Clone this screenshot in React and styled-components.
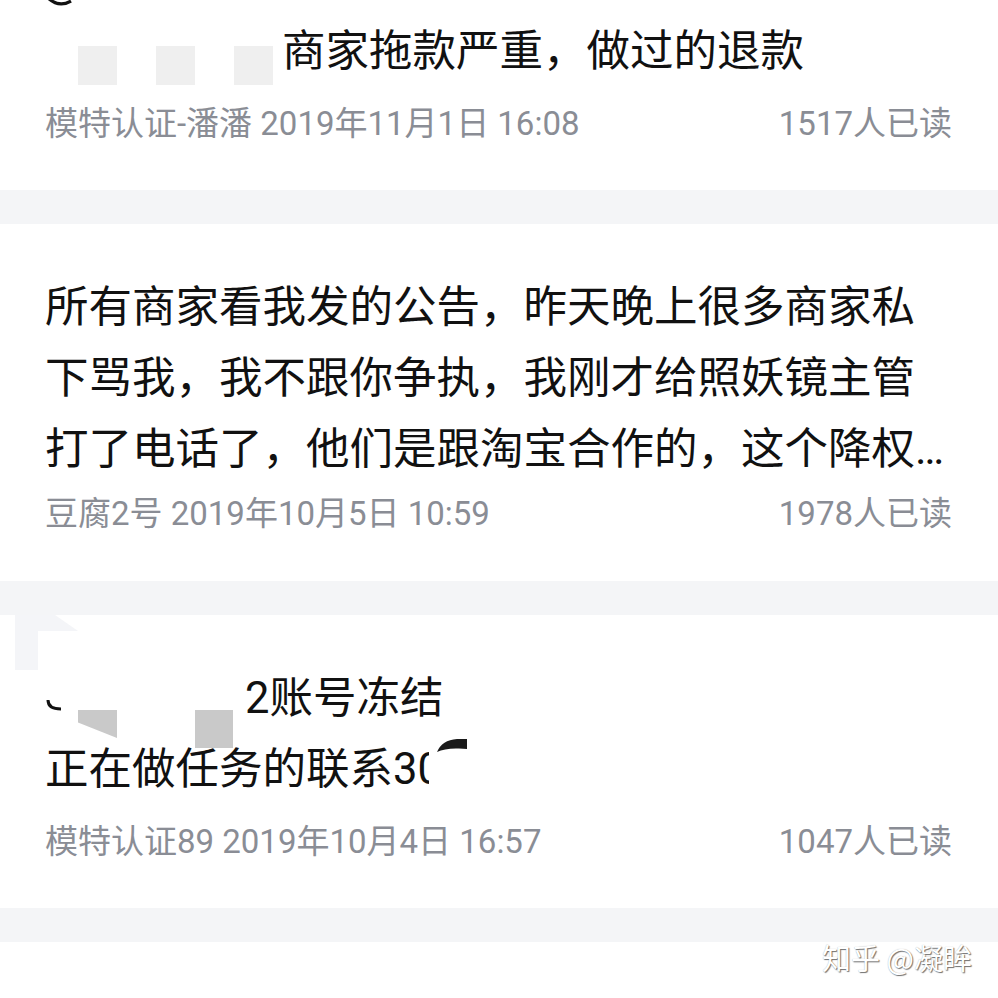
import React from 'react';
import styled, { createGlobalStyle } from 'styled-components';

const GlobalStyle = createGlobalStyle`
  html, body {
    margin: 0;
    padding: 0;
    background: #ffffff;
  }
  body {
    font-family: Roboto, "Noto Sans CJK SC", sans-serif;
    overflow: hidden;
  }
`

const posts = [
  {
    id: 'p1',
    meta: '模特认证-潘潘 2019年11月1日 16:08',
    reads: '1517人已读',
  },
  {
    id: 'p2',
    lines: [
      '所有商家看我发的公告，昨天晚上很多商家私',
      '下骂我，我不跟你争执，我刚才给照妖镜主管',
      '打了电话了，他们是跟淘宝合作的，这个降权…',
    ],
    meta: '豆腐2号 2019年10月5日 10:59',
    reads: '1978人已读',
  },
  {
    id: 'p3',
    meta: '模特认证89 2019年10月4日 16:57',
    reads: '1047人已读',
  },
];

function Feed() {
  return (
    <Page>
      <GlobalStyle />
      <Card $top={16} $gap={15} $bottom={44}>
        <TopFragment width="40" height="10" viewBox="0 0 40 10">
          <path d="M3 -2 Q14 8 26 1" fill="none" stroke="#111" strokeWidth="3.2" />
        </TopFragment>
        <Line>
          <Mask $ml={33} $mt={30} $w={39} $h={39} $color="#efefef" />
          <Mask $ml={39} $mt={30} $w={39} $h={39} $color="#efefef" />
          <Mask $ml={39} $mt={30} $w={39} $h={39} $color="#efefef" />
          <LineText $ml={9}>商家拖款严重，做过的退款</LineText>
        </Line>
        <Meta>
          <span>{posts[0].meta}</span>
          <span>{posts[0].reads}</span>
        </Meta>
      </Card>
      <Band />
      <Card $top={48} $gap={7} $bottom={45}>
        {posts[1].lines.map((l) => (
          <Line key={l}>
            <LineText>{l}</LineText>
          </Line>
        ))}
        <Meta>
          <span>{posts[1].meta}</span>
          <span>{posts[1].reads}</span>
        </Meta>
      </Card>
      <Band />
      <Card $top={48} $gap={15} $bottom={44}>
        <CornerShade width="80" height="56" viewBox="0 0 80 56">
          <polygon points="15,0 55,0 78,16 38,16 38,55 15,55" fill="#f4f5f8" />
        </CornerShade>
        <Line>
          <Curl width="18" height="12" viewBox="0 0 18 12">
            <path d="M3 0 Q3 9 16 9" fill="none" stroke="#111" strokeWidth="3" />
          </Curl>
          <Mask $ml={15} $mt={47} $w={39} $h={28} $color="#c9c9c9" $slant />
          <Mask $ml={78} $mt={47} $w={38} $h={38} $color="#c9c9c9" />
          <LineText $ml={12}>2账号冻结</LineText>
        </Line>
        <Line>
          <LineText>正在做任务的联系3</LineText>
          <Clipped>0</Clipped>
          <Wedge width="30" height="14" viewBox="0 0 30 14">
            <path d="M0 13 Q5 1 20 0 L30 0 L30 10 L22 9.5 Q8 9 0 13 Z" fill="#1a1a1a" />
          </Wedge>
        </Line>
        <Meta>
          <span>{posts[2].meta}</span>
          <span>{posts[2].reads}</span>
        </Meta>
      </Card>
      <Band />
      <Card $top={56} $gap={0} $bottom={0}>
        <Watermark>知乎 @凝眸</Watermark>
      </Card>
    </Page>
  );
}

const Page = styled.div`
  width: 998px;
  height: 998px;
  overflow: hidden;
  background: #ffffff;
  display: flex;
  flex-direction: column;
`
const Card = styled.div`
  position: relative;
  flex-shrink: 0;
  background: #ffffff;
  padding: ${props => props.$top}px 46px ${props => props.$bottom}px 45px;
  display: flex;
  flex-direction: column;
  & > ${() => Meta} {
    margin-top: ${props => props.$gap}px;
  }
`
const Band = styled.div`
  flex-shrink: 0;
  height: 34px;
  background: #f4f5f7;
`
const Line = styled.div`
  display: flex;
  align-items: flex-start;
  height: 71px;
  white-space: nowrap;
  color: #111111;
  font-size: 43.5px;
  line-height: 71px;
`
const LineText = styled.span`
  margin-left: ${props => props.$ml || 0}px;
`
const Clipped = styled.span`
  display: inline-block;
  width: 12px;
  overflow: hidden;
`
const Mask = styled.div`
  flex-shrink: 0;
  margin-left: ${props => props.$ml}px;
  margin-top: ${props => props.$mt}px;
  width: ${props => props.$w}px;
  height: ${props => props.$h}px;
  background: ${props => props.$color};
  clip-path: ${props => props.$slant ? 'polygon(0 0, 100% 0, 100% 100%, 0 45%)' : 'none'};
`
const Curl = styled.svg`
  flex-shrink: 0;
  margin-top: 37px;
`
const Wedge = styled.svg`
  flex-shrink: 0;
  margin-left: 8px;
  margin-top: 5px;
`
const Meta = styled.div`
  display: flex;
  justify-content: space-between;
  height: 44px;
  line-height: 44px;
  font-size: 33px;
  color: #8a8d95;
  white-space: nowrap;
`
const TopFragment = styled.svg`
  position: absolute;
  left: 45px;
  top: 0;
`
const CornerShade = styled.svg`
  position: absolute;
  left: 0;
  top: 0;
`
const Watermark = styled.div`
  position: absolute;
  right: 26px;
  top: -2px;
  font-family: "Noto Sans CJK SC", sans-serif;
  font-size: 29px;
  line-height: 34px;
  color: #ffffff;
  text-shadow: 1px 1px 1px rgba(0, 0, 0, 0.55), 0 0 1px rgba(0, 0, 0, 0.3);
  white-space: nowrap;
`

export default Feed;
